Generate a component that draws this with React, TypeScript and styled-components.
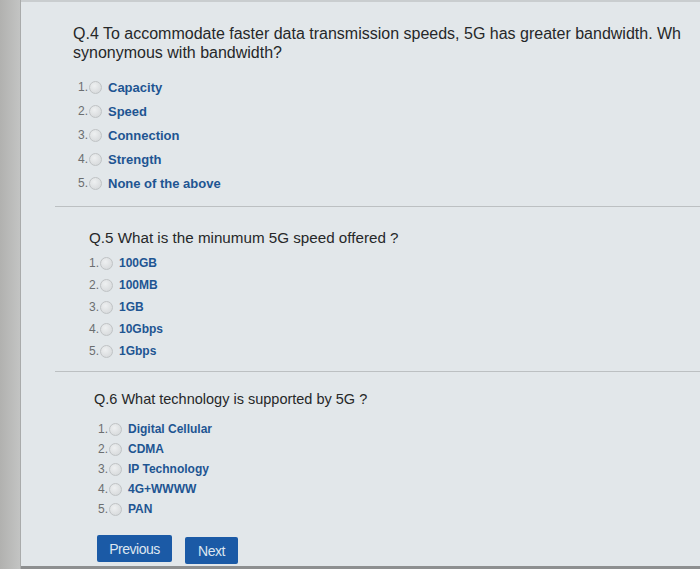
import React from "react";
import styled, { createGlobalStyle } from "styled-components";

const GlobalStyle = createGlobalStyle`
  html, body {
    margin: 0;
    padding: 0;
    background: #dfe4e7;
  }
  #root {
    height: 569px;
  }
`;

const Screen = styled.div`
  display: flex;
  height: 569px;
  overflow: hidden;
  font-family: "Liberation Sans", Arial, sans-serif;
`;

const Bezel = styled.div`
  flex: 0 0 20px;
  background: linear-gradient(to right, #b1b1af, #c3c4c3);
  border-right: 1px solid #a9abab;
`;

const Page = styled.div`
  flex: 1;
  display: flex;
  flex-direction: column;
  background: #e2e7ea;
  border-top: 2px solid #c9cdcf;
  border-bottom: 3px solid #8d8f90;
`;

const Section = styled.section<{ $indent: number; $top: number; $divider?: boolean }>`
  padding: ${(p) => p.$top}px 0 0 ${(p) => p.$indent}px;
  margin-left: ${(p) => (p.$divider ? 34 : 0)}px;
  ${(p) => (p.$divider ? "border-top: 1px solid #bcc0c2;" : "")}
  ${(p) => (p.$divider ? `padding-left: ${p.$indent - 34}px;` : "")}
`;

const Heading = styled.h2<{ $size: number }>`
  margin: 0;
  font-size: ${(p) => p.$size}px;
  line-height: 19px;
  font-weight: normal;
  color: #262829;
  white-space: nowrap;
  overflow: hidden;
`;

const Options = styled.ol<{ $gap: number; $shift: number; $end: number }>`
  list-style: none;
  margin: ${(p) => p.$gap}px 0 ${(p) => p.$end}px ${(p) => p.$shift}px;
  padding: 0;
`;

const Option = styled.li<{ $height: number }>`
  display: flex;
  align-items: center;
  height: ${(p) => p.$height}px;
`;

const Num = styled.span`
  font-size: 12px;
  color: #6b6e70;
  width: 11px;
`;

const Radio = styled.span`
  width: 11px;
  height: 11px;
  border-radius: 50%;
  border: 1px solid #c0c3c5;
  background: radial-gradient(circle at 40% 35%, #eef0f1, #d2d5d7);
  margin-right: 6px;
`;

const Label = styled.label<{ $size: number }>`
  font-size: ${(p) => p.$size}px;
  font-weight: bold;
  color: #1e5592;
`;

const Buttons = styled.div`
  display: flex;
  align-items: flex-start;
  gap: 13px;
  padding: 16px 0 0 76px;
`;

const Button = styled.button<{ $width: number; $offset?: number }>`
  width: ${(p) => p.$width}px;
  height: 27px;
  margin-top: ${(p) => p.$offset ?? 0}px;
  border: none;
  border-radius: 2px;
  background: #1b5aa6;
  color: #dde6f0;
  font-family: "Liberation Sans", Arial, sans-serif;
  font-size: 14px;
  letter-spacing: -0.5px;
  padding: 0;
`;

type Question = {
  title: string[];
  options: string[];
  indent: number;
  top: number;
  gap: number;
  shift: number;
  row: number;
  end: number;
  heading: number;
  label: number;
  divider?: boolean;
};

const questions: Question[] = [
  {
    title: [
      "Q.4 To accommodate faster data transmission speeds, 5G has greater bandwidth. Wh",
      "synonymous with bandwidth?",
    ],
    options: ["Capacity", "Speed", "Connection", "Strength", "None of the above"],
    indent: 52,
    top: 22,
    gap: 13,
    shift: 5,
    row: 24,
    end: 11,
    heading: 16,
    label: 13,
  },
  {
    title: ["Q.5 What is the minumum 5G speed offered ?"],
    options: ["100GB", "100MB", "1GB", "10Gbps", "1Gbps"],
    indent: 68,
    top: 21,
    gap: 5,
    shift: 0,
    row: 22,
    end: 9,
    heading: 15.2,
    label: 12,
    divider: true,
  },
  {
    title: ["Q.6 What technology is supported by 5G ?"],
    options: ["Digital Cellular", "CDMA", "IP Technology", "4G+WWWW", "PAN"],
    indent: 73,
    top: 18,
    gap: 10,
    shift: 4,
    row: 20,
    end: 0,
    heading: 14.5,
    label: 12,
    divider: true,
  },
];

export default function App() {
  return (
    <>
      <GlobalStyle />
      <Screen>
        <Bezel />
        <Page>
          {questions.map((q) => (
            <Section key={q.title[0]} $indent={q.indent} $top={q.top} $divider={q.divider}>
              {q.title.map((line) => (
                <Heading key={line} $size={q.heading}>
                  {line}
                </Heading>
              ))}
              <Options $gap={q.gap} $shift={q.shift} $end={q.end}>
                {q.options.map((opt, i) => (
                  <Option key={opt} $height={q.row}>
                    <Num>{i + 1}.</Num>
                    <Radio />
                    <Label $size={q.label}>{opt}</Label>
                  </Option>
                ))}
              </Options>
            </Section>
          ))}
          <Buttons>
            <Button $width={75}>Previous</Button>
            <Button $width={53} $offset={2}>
              Next
            </Button>
          </Buttons>
        </Page>
      </Screen>
    </>
  );
}
